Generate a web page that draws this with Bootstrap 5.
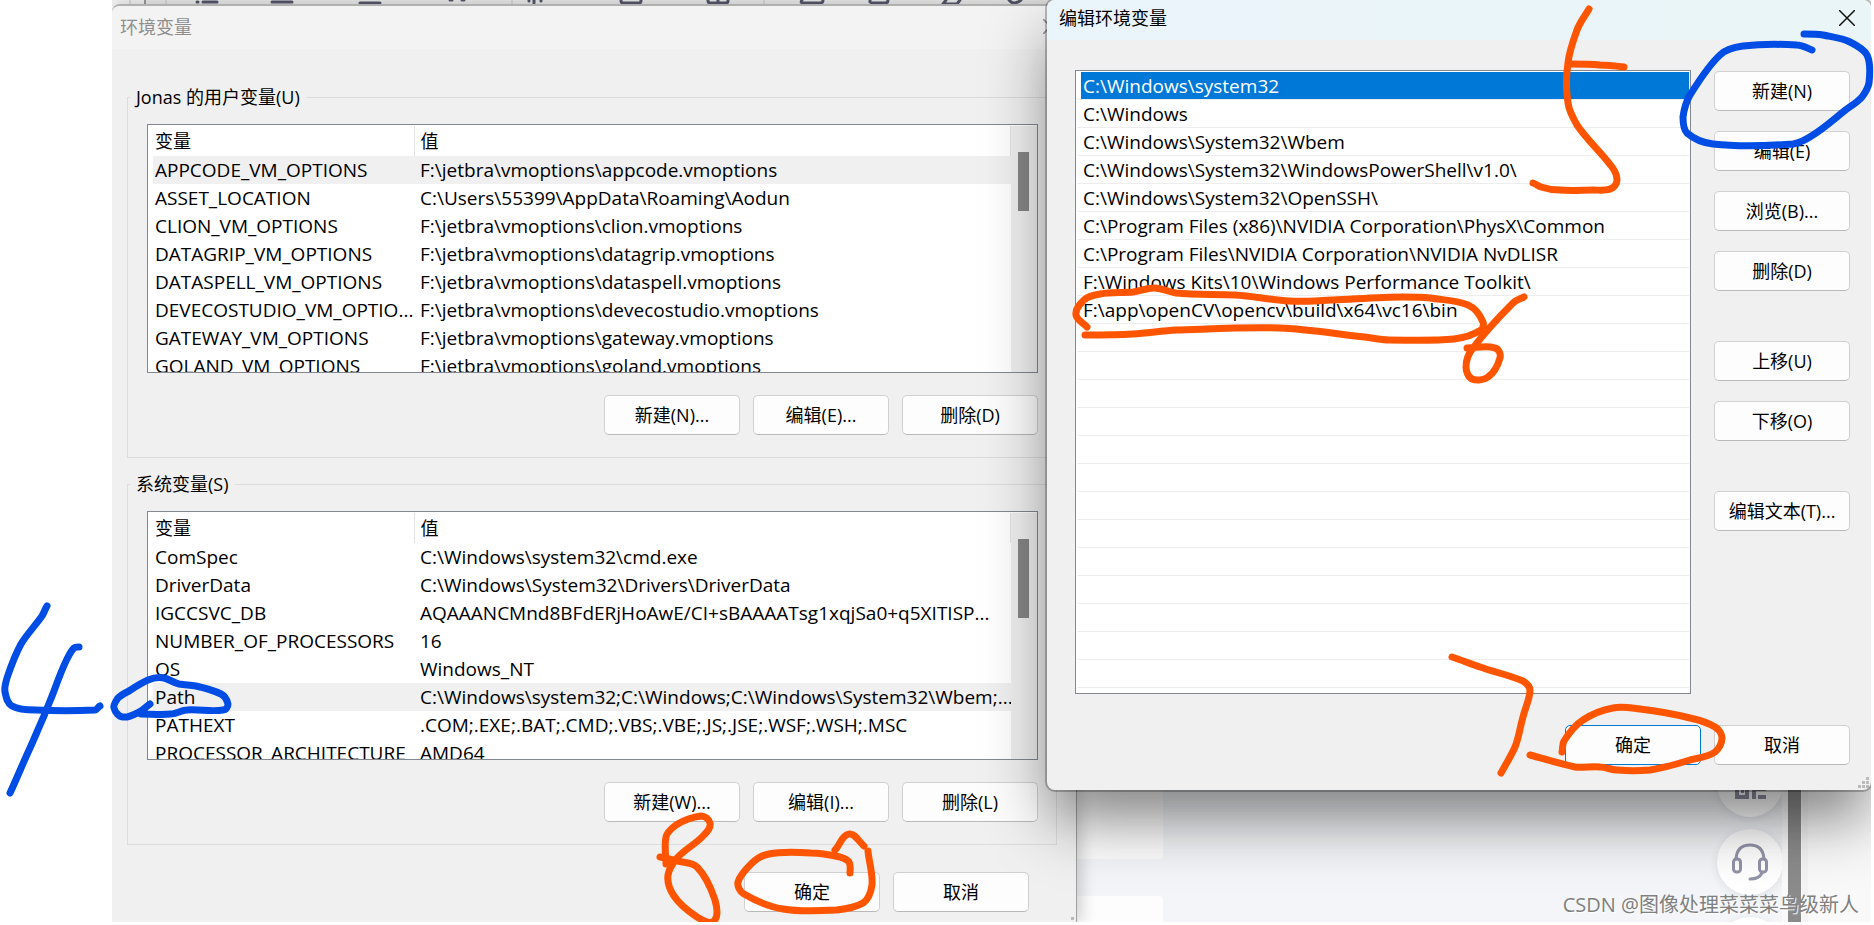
<!DOCTYPE html>
<html lang="zh-CN">
<head>
<meta charset="utf-8">
<meta name="viewport" content="width=device-width, initial-scale=1">
<title>环境变量</title>
<link href="https://cdn.jsdelivr.net/npm/bootstrap@5.3.0/dist/css/bootstrap.min.css" rel="stylesheet">
<style>
body{font-family:"Open Sans","Noto Sans CJK SC",sans-serif;font-size:18px;line-height:24px;color:#000;background:#fff}
.screen{margin:0 3px 0 112px;height:calc(100vh - 3px);min-height:600px;background:#f3f5f8}
/* page behind the dialogs */
.tools{height:6px;background:#e8e8e8}
.tools svg{position:absolute;left:0;top:0}
.behind{position:absolute;left:965px;right:0;top:0;bottom:0}
.sheet{width:86px;background:#fdfdfe;border-radius:0 0 4px 0}
.sheet-gap{height:37px}
.sheet-next{height:26px;border-radius:0 4px 0 0}
.fabs{gap:12px;margin:0 -1px -61px 0}
.fab{width:66px;height:66px;background:#fff;box-shadow:0 2px 8px rgba(60,70,90,.12)}
.fab-last{margin-top:10px}
.gutter{width:20px;padding:0 1px 0 6px;background:#fafafa}
.gutter-thumb{background:#8b8b8b}
.margin-pane{width:69px;background:#f9f9f9;border-left:6px solid #f4f4f4}
/* dialogs */
.win{position:absolute;background:#f0f0f0}
.win-env{left:0;top:4px;width:965px;bottom:0;border-top:2px solid #b0b0b0;border-right:1px solid #a0a0a0;border-radius:8px 8px 0 0;box-shadow:4px 0 16px rgba(0,0,0,.2)}
.win-edit{left:935px;right:0;top:0;border-radius:8px;box-shadow:0 0 0 2px rgba(0,0,0,.24),0 40px 40px -20px rgba(0,0,0,.14),0 32px 64px rgba(0,0,0,.38)}
.bar-env{height:43px;padding:0 18px 2px 8px;background:#f3f3f3;color:#8e8e8e;border-radius:8px 8px 0 0}
.bar-edit{height:40px;padding:0 16px 4px 12px;background:linear-gradient(90deg,#eaf4fb,#eaf5f7);border-radius:8px 8px 0 0}
.bar-env h1,.bar-edit h2{font-size:18px;line-height:24px;font-weight:400;margin:0}
.xbtn{border:0;background:none;padding:0;line-height:0;color:inherit}
.group{margin:14px 19px 0 15px;border:1px solid #dcdcdc;padding:0 0 22px}
.bar-env + .group{margin-top:36px}
.group legend{float:none;width:auto;margin:0 0 15px 2px;padding:0 6px;font-size:18px;line-height:24px}
.listbox{margin:0 18px 0 19px;height:249px;background:#fff;border:1px solid #828790;padding:1px 0 0 5px}
.vars{table-layout:fixed;width:100%;font-size:19px;line-height:28px}
.vars th{font-size:18px;font-weight:400;line-height:30px;padding:0 2px;border-right:1px solid #e2e2e2}
.vars td{padding:0 2px}
.vars th:first-child{width:261px}
.vars th+th,.vars td+td{padding:0 0 0 6px}
.picked td{background:#f0f0f0}
.track{width:26px;background:#f0f0f0;padding:26px 8px 0 7px}
.thumb{background:#868686;height:59px}
.thumb-long{height:79px}
.acts{gap:13px}
.group .acts{margin:22px 18px 0}
.closing{margin:27px 47px 0}
.dbtn{width:136px;height:40px;padding:0;border:1px solid #d0d0d0;border-bottom-color:#b9b9b9;border-radius:5px;background:#fdfdfd;font-size:18px;line-height:24px;color:#000}
.dbtn.main-act{border-color:#0078d4}
.edit-body{padding:30px 21px 25px 28px;gap:23px}
.paths{height:624px;margin:0;background:#fff;border:1px solid #828790;padding:1px 1px 0;font-size:19px;line-height:25px}
.paths li{height:28px;border-bottom:1px solid #ededed;padding-left:4px}
.paths span{display:block;padding:2px 0 0 2px}
.paths .on span{background:#0078d7;color:#fff}
.side{gap:20px;padding-top:1px}
.gap-above{margin-top:30px}
.edit-foot{padding:6px 21px 25px 0}
.grip{position:absolute;right:2px;bottom:2px}
.ink{position:absolute;left:0;top:0;pointer-events:none}
.ink path{fill:none;stroke-width:7;stroke-linecap:round;stroke-linejoin:round}
.ink .o{stroke:#ff5500}
.ink .b{stroke:#004de6}
.credit{position:absolute;right:15px;bottom:3px;font-size:20px;line-height:28px;color:#808080;text-shadow:1px 1px 1px #fff}
</style>
</head>
<body class="position-relative overflow-hidden">
<main class="screen position-relative overflow-hidden">
  <div class="tools">
    <svg width="960" height="6" fill="none" stroke="#55556a" stroke-width="3" stroke-linecap="round" aria-hidden="true">
      <path stroke="none" fill="#f0f0f0" d="M0 0H32V6H0z"/>
      <path stroke="#c4c4c4" stroke-width="1" d="M18 0V6M54 0V6M400 0V6M652 0V6"/>
      <path stroke="#999" stroke-width="2" d="M33 0V6"/>
      <path d="M85 2h1M91 2H105M160 2H180M248 3H268M338 0h2M350 0h2M417 0v1M422 0v3M429 0v1M509 0V1Q509 3 512 3H526Q529 3 529 1V0M596 0V1Q596 3 599 3H613Q616 3 616 1V0M606 0V3M690 0Q688 3 691 3H708Q711 3 711 0M758 0V2Q759 3 761 3H773Q776 3 776 0M834 0L831 4H845L848 0M897 0Q902 6 909 0"/>
    </svg>
  </div>

  <div class="behind d-flex">
    <div class="d-flex flex-column">
      <div class="sheet flex-grow-1"></div>
      <div class="sheet-gap"></div>
      <div class="sheet sheet-next"></div>
    </div>
    <div class="fabs ms-auto d-flex flex-column justify-content-end">
      <div class="fab rounded-circle d-flex align-items-end justify-content-center pb-3">
        <svg width="32" height="32" fill="none" stroke="#8b8b9e" stroke-width="4" aria-hidden="true"><path d="M3 16V28H13V16zM20 30V20H32M24 28H32M3 2H13V12H3z"/><path d="M7 22h3"/></svg>
      </div>
      <div class="fab rounded-circle d-flex align-items-center justify-content-center">
        <svg width="38" height="38" fill="none" stroke="#9293a8" stroke-width="3" stroke-linecap="round" aria-hidden="true"><path d="M5 16Q6 2 19 2T33 16"/><rect x="2.500" y="16" width="7" height="13" rx="3"/><rect x="28.500" y="16" width="7" height="13" rx="3"/><path d="M31 30Q28 36 19 36"/></svg>
      </div>
      <div class="fab fab-last rounded-circle"></div>
    </div>
    <div class="gutter"><div class="gutter-thumb h-100"></div></div>
    <div class="margin-pane"></div>
  </div>

  <section class="win win-env" aria-label="环境变量">
    <div class="bar-env d-flex align-items-center justify-content-between">
      <h1>环境变量</h1>
      <button class="xbtn" type="button" aria-label="关闭"><svg width="15" height="15" stroke="currentColor" stroke-width="1.500"><path d="M0 0L15 15M15 0L0 15"/></svg></button>
    </div>
    <fieldset class="group">
      <legend>Jonas 的用户变量(U)</legend>
      <div class="listbox d-flex overflow-hidden">
        <div class="flex-grow-1">
        <table class="vars text-nowrap">
          <thead><tr><th>变量</th><th>值</th></tr></thead>
          <tbody>
            <tr class="picked"><td>APPCODE_VM_OPTIONS</td><td>F:\jetbra\vmoptions\appcode.vmoptions</td></tr>
            <tr><td>ASSET_LOCATION</td><td>C:\Users\55399\AppData\Roaming\Aodun</td></tr>
            <tr><td>CLION_VM_OPTIONS</td><td>F:\jetbra\vmoptions\clion.vmoptions</td></tr>
            <tr><td>DATAGRIP_VM_OPTIONS</td><td>F:\jetbra\vmoptions\datagrip.vmoptions</td></tr>
            <tr><td>DATASPELL_VM_OPTIONS</td><td>F:\jetbra\vmoptions\dataspell.vmoptions</td></tr>
            <tr><td>DEVECOSTUDIO_VM_OPTIO...</td><td>F:\jetbra\vmoptions\devecostudio.vmoptions</td></tr>
            <tr><td>GATEWAY_VM_OPTIONS</td><td>F:\jetbra\vmoptions\gateway.vmoptions</td></tr>
            <tr><td>GOLAND_VM_OPTIONS</td><td>F:\jetbra\vmoptions\goland.vmoptions</td></tr>
          </tbody>
        </table>
        </div>
        <div class="track flex-shrink-0"><div class="thumb"></div></div>
      </div>
      <div class="acts d-flex justify-content-end">
        <button class="btn dbtn" type="button">新建(N)...</button>
        <button class="btn dbtn" type="button">编辑(E)...</button>
        <button class="btn dbtn" type="button">删除(D)</button>
      </div>
    </fieldset>
    <fieldset class="group">
      <legend>系统变量(S)</legend>
      <div class="listbox d-flex overflow-hidden">
        <div class="flex-grow-1">
        <table class="vars text-nowrap">
          <thead><tr><th>变量</th><th>值</th></tr></thead>
          <tbody>
            <tr><td>ComSpec</td><td>C:\Windows\system32\cmd.exe</td></tr>
            <tr><td>DriverData</td><td>C:\Windows\System32\Drivers\DriverData</td></tr>
            <tr><td>IGCCSVC_DB</td><td>AQAAANCMnd8BFdERjHoAwE/CI+sBAAAATsg1xqjSa0+q5XITISP...</td></tr>
            <tr><td>NUMBER_OF_PROCESSORS</td><td>16</td></tr>
            <tr><td>OS</td><td>Windows_NT</td></tr>
            <tr class="picked"><td>Path</td><td>C:\Windows\system32;C:\Windows;C:\Windows\System32\Wbem;...</td></tr>
            <tr><td>PATHEXT</td><td>.COM;.EXE;.BAT;.CMD;.VBS;.VBE;.JS;.JSE;.WSF;.WSH;.MSC</td></tr>
            <tr><td>PROCESSOR_ARCHITECTURE</td><td>AMD64</td></tr>
          </tbody>
        </table>
        </div>
        <div class="track flex-shrink-0"><div class="thumb thumb-long"></div></div>
      </div>
      <div class="acts d-flex justify-content-end">
        <button class="btn dbtn" type="button">新建(W)...</button>
        <button class="btn dbtn" type="button">编辑(I)...</button>
        <button class="btn dbtn" type="button">删除(L)</button>
      </div>
    </fieldset>
    <div class="acts closing d-flex justify-content-end">
      <button class="btn dbtn" type="button">确定</button>
      <button class="btn dbtn" type="button">取消</button>
    </div>
    <svg class="grip" width="3" height="3" aria-hidden="true"><path fill="#b8b8b8" d="M0 0h3v3H0z"/></svg>
  </section>

  <section class="win win-edit" aria-label="编辑环境变量">
    <div class="bar-edit d-flex align-items-center justify-content-between">
      <h2>编辑环境变量</h2>
      <button class="xbtn" type="button" aria-label="关闭"><svg width="16" height="16" stroke="#111" stroke-width="1.500"><path d="M0 0L16 16M16 0L0 16"/></svg></button>
    </div>
    <div class="edit-body d-flex">
      <ul class="paths list-unstyled flex-grow-1 overflow-hidden text-nowrap">
        <li class="on"><span>C:\Windows\system32</span></li>
        <li><span>C:\Windows</span></li>
        <li><span>C:\Windows\System32\Wbem</span></li>
        <li><span>C:\Windows\System32\WindowsPowerShell\v1.0\</span></li>
        <li><span>C:\Windows\System32\OpenSSH\</span></li>
        <li><span>C:\Program Files (x86)\NVIDIA Corporation\PhysX\Common</span></li>
        <li><span>C:\Program Files\NVIDIA Corporation\NVIDIA NvDLISR</span></li>
        <li><span>F:\Windows Kits\10\Windows Performance Toolkit\</span></li>
        <li><span>F:\app\openCV\opencv\build\x64\vc16\bin</span></li>
        <li></li><li></li><li></li><li></li><li></li><li></li><li></li><li></li><li></li><li></li><li></li><li></li><li></li>
      </ul>
      <div class="side d-flex flex-column">
        <button class="btn dbtn" type="button">新建(N)</button>
        <button class="btn dbtn" type="button">编辑(E)</button>
        <button class="btn dbtn" type="button">浏览(B)...</button>
        <button class="btn dbtn" type="button">删除(D)</button>
        <button class="btn dbtn gap-above" type="button">上移(U)</button>
        <button class="btn dbtn" type="button">下移(O)</button>
        <button class="btn dbtn gap-above" type="button">编辑文本(T)...</button>
      </div>
    </div>
    <div class="acts edit-foot d-flex justify-content-end">
      <button class="btn dbtn main-act" type="button">确定</button>
      <button class="btn dbtn" type="button">取消</button>
    </div>
    <svg class="grip" width="11" height="11" aria-hidden="true"><path fill="#bbb" d="M8 0h3v3H8zM4 4h3v3H4zM8 4h3v3H8zM0 8h3v3H0zM4 8h3v3H4zM8 8h3v3H8z"/></svg>
  </section>
</main>
<div class="credit">CSDN @图像处理菜菜菜鸟级新人</div>
<svg class="ink w-100 h-100" aria-hidden="true"></svg>

<script src="https://cdn.jsdelivr.net/npm/bootstrap@5.3.0/dist/js/bootstrap.bundle.min.js"></script>
<script>
// Pen strokes: colour class, then the x,y points the pen went through
const strokes = [
  ['b','47,606 42,616 21,644 7,678 5,692 12,706 36,710 95,710 100,706'],
  ['b','79,647 74,648 67,659 54,691 44,716 30,748 10,793'],
  ['b','150,704 141,711 123,717 114,708 118,698 129,691 148,680 164,678 179,684 196,686 221,694 228,704 223,710 187,710 171,714 141,714'],
  ['o','1589,9 1577,30 1568,63 1568,103 1577,125 1612,167 1617,180 1610,189 1593,190 1560,190 1541,187 1533,183'],
  ['o','1570,64 1600,65 1624,67'],
  ['b','1804,34 1823,35 1850,42 1867,55 1869,83 1862,97 1843,112 1813,135 1793,144 1713,144 1687,133 1683,117 1690,95 1720,55 1743,46 1797,45 1812,50'],
  ['o','1087,327 1076,315 1084,300 1100,294 1133,292 1154,288 1176,293 1235,295 1289,301 1333,300 1403,297 1430,298 1468,305 1483,322 1481,330 1454,339 1389,340 1365,337 1279,328 1176,330 1133,334 1085,335'],
  ['o','1524,297 1513,303 1473,348 1466,367 1472,379 1488,377 1500,358 1495,348 1467,348'],
  ['o','1452,657 1480,667 1523,681 1530,690 1523,717 1515,747 1501,773'],
  ['o','1562,752 1564,741 1583,720 1613,708 1640,709 1690,718 1715,727 1722,738 1715,752 1690,760 1650,770 1617,770 1600,767 1575,767 1530,755'],
  ['o','660,857 677,861 697,867 715,900 714,921 697,917 674,896 668,875 677,858 704,835 710,823 701,816 676,825 666,837 666,864'],
  ['o','850,873 849,862 840,857 811,853 769,854 751,864 738,882 744,894 783,909 836,910 863,903 872,885 868,851'],
  ['o','835,850 849,834 864,846']
];
const ink = document.querySelector('.ink');
for (const [tone, text] of strokes) {
  const p = text.split(' ').map(s => s.split(',').map(Number));
  let d = 'M' + p[0];
  for (let i = 0; i < p.length - 1; i++) {
    const a = p[i - 1] || p[i], b = p[i], c = p[i + 1], e = p[i + 2] || c;
    const k = Math.hypot(c[0] - b[0], c[1] - b[1]) / 3;
    const u = Math.hypot(c[0] - a[0], c[1] - a[1]) || 1, v = Math.hypot(e[0] - b[0], e[1] - b[1]) || 1;
    d += 'C' + [b[0] + (c[0] - a[0]) / u * k, b[1] + (c[1] - a[1]) / u * k, c[0] - (e[0] - b[0]) / v * k, c[1] - (e[1] - b[1]) / v * k, c[0], c[1]].map(Math.round);
  }
  const el = document.createElementNS('http://www.w3.org/2000/svg', 'path');
  el.setAttribute('d', d);
  el.setAttribute('class', tone);
  ink.append(el);
}
</script>
</body>
</html>
